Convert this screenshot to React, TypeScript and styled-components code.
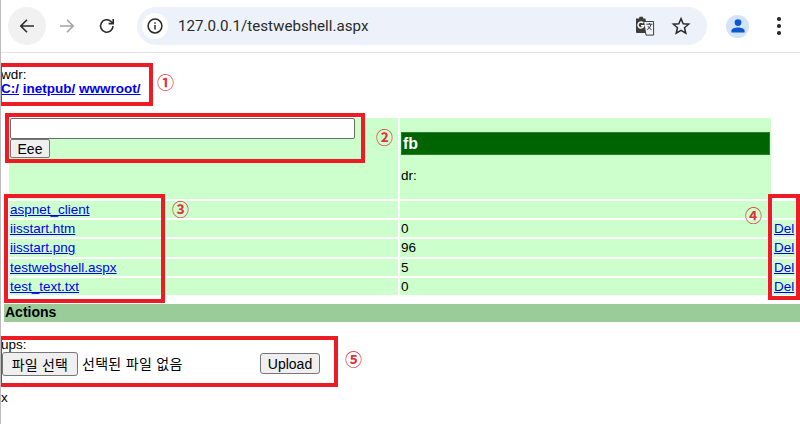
import React from "react";
import styled, { createGlobalStyle } from "styled-components";

const files = [
  { name: "aspnet_client", size: "", del: false },
  { name: "iisstart.htm", size: "0", del: true },
  { name: "iisstart.png", size: "96", del: true },
  { name: "testwebshell.aspx", size: "5", del: true },
  { name: "test_text.txt", size: "0", del: true },
];

const marks = [
  { n: "①", box: { left: -2, top: 63, width: 155, height: 43 }, x: 157, y: 72 },
  { n: "②", box: { left: 5, top: 113, width: 360, height: 50 }, x: 376, y: 127 },
  { n: "③", box: { left: 4, top: 194, width: 161, height: 109 }, x: 172, y: 199 },
  { n: "④", box: { left: 768, top: 194, width: 32, height: 106 }, x: 745, y: 205 },
  { n: "⑤", box: { left: -2, top: 336, width: 340, height: 51 }, x: 345, y: 349 },
];

const App = () => {
  return (
    <Page>
      <GlobalStyle />
      <Toolbar>
        <BackButton>
          <svg width="20" height="20" viewBox="0 0 20 20" fill="none" stroke="#2b2b2b" strokeWidth="1.6">
            <path d="M17 10H4M10 3.8 3.8 10l6.2 6.2" />
          </svg>
        </BackButton>
        <NavIcon>
          <svg width="20" height="20" viewBox="0 0 20 20" fill="none" stroke="#a3a3a3" strokeWidth="1.6">
            <path d="M3 10h13M10 3.8 16.2 10 10 16.2" />
          </svg>
        </NavIcon>
        <NavIcon>
          <svg width="20" height="20" viewBox="0 0 20 20" fill="none" stroke="#2b2b2b" strokeWidth="1.6">
            <path d="M16 10a6.2 6.2 0 1 1-1.9-4.5L16 7.3" />
            <path d="M16.2 3v4.6h-4.6" />
          </svg>
        </NavIcon>
        <Omnibox>
          <InfoChip>
            <svg width="18" height="18" viewBox="0 0 18 18" fill="none" stroke="#2b2b2b" strokeWidth="1.5">
              <circle cx="9" cy="9" r="6.9" />
              <path d="M9 8v4.5M9 5.2v1.5" />
            </svg>
          </InfoChip>
          <Url>127.0.0.1/testwebshell.aspx</Url>
          <OmniIcons>
            <svg width="20" height="20" viewBox="0 0 20 20">
              <path d="M1 2.5h3l.6-1.8h3.2l.6 1.8h2l3 14.5H2a1 1 0 0 1-1-1z" fill="#3c3c3c" />
              <path d="M8.6 5.5h10v13.6h-7.6z" fill="#eef2fa" stroke="#3c3c3c" strokeWidth="1" />
              <path d="M11.4 8.2h6M14.4 7v1.2M16 8.2c-.5 2.6-2 4.4-3.8 5.4M13 10.2c.8 1.6 2 2.8 3.6 3.6" fill="none" stroke="#3c3c3c" strokeWidth="1" />
              <path d="M8.2 7a3 3 0 1 0 .7 2.7H6" fill="none" stroke="#fff" strokeWidth="1.4" />
            </svg>
            <svg width="20" height="20" viewBox="0 0 20 20" fill="none" stroke="#2b2b2b" strokeWidth="1.5" strokeLinejoin="miter">
              <path d="m10 2.6 2.2 5.1 5.5.5-4.2 3.6 1.3 5.4L10 14.3l-4.8 2.9 1.3-5.4-4.2-3.6 5.5-.5z" />
            </svg>
          </OmniIcons>
        </Omnibox>
        <Avatar>
          <svg width="16" height="16" viewBox="0 0 16 16" fill="#0b57d0">
            <circle cx="8" cy="4.6" r="3.4" />
            <path d="M1.4 14.4v-1.6c0-2.2 3.6-3.4 6.6-3.4s6.6 1.2 6.6 3.4v1.6z" />
          </svg>
        </Avatar>
        <Kebab>
          <span />
          <span />
          <span />
        </Kebab>
      </Toolbar>

      <Content>
        <PathBlock>
          wdr:
          <br />
          <PathLink href="#">C:/</PathLink> <PathLink href="#">inetpub/</PathLink>{" "}
          <PathLink href="#">wwwroot/</PathLink>
        </PathBlock>

        <FileTable>
          <colgroup>
            <col style={{ width: 389 }} />
            <col style={{ width: 371 }} />
            <col style={{ width: 29 }} />
          </colgroup>
          <tbody>
            <tr>
              <TopCell>
                <CmdInput />
                <CmdButton>Eee</CmdButton>
              </TopCell>
              <TopCell>
                <Heading>fb</Heading>
                <DirLabel>dr:</DirLabel>
              </TopCell>
              <BlankCell />
            </tr>
            {files.map((f) => (
              <tr key={f.name}>
                <RowCell>
                  <a href="#">{f.name}</a>
                </RowCell>
                <RowCell>{f.size}</RowCell>
                <RowCell>{f.del ? <a href="#">Del</a> : null}</RowCell>
              </tr>
            ))}
          </tbody>
        </FileTable>

        <ActionsBar>Actions</ActionsBar>

        <UploadBlock>
          ups:
          <UploadRow>
            <FileButton>파일 선택</FileButton>
            <NoFile>선택된 파일 없음</NoFile>
            <UploadButton>Upload</UploadButton>
          </UploadRow>
        </UploadBlock>
        <Footer>x</Footer>
      </Content>

      {marks.map((m) => (
        <React.Fragment key={m.n}>
          <RedBox style={m.box} />
          <Num style={{ left: m.x, top: m.y }}>{m.n}</Num>
        </React.Fragment>
      ))}
    </Page>
  );
};

export default App;

const GlobalStyle = createGlobalStyle`
  html, body {
    margin: 0;
    background: #fff;
    overflow: hidden;
  }
  body {
    font-family: "Liberation Sans", Arial, "Noto Sans CJK KR", sans-serif;
    font-size: 13.5px;
    color: #000;
  }
  a {
    color: #0000ee;
  }
`;

const Page = styled.div`
  position: relative;
  width: 800px;
  height: 424px;
  overflow: hidden;
  box-sizing: border-box;
  border-left: 1px solid #bdbdbd;
`;

const Toolbar = styled.div`
  display: flex;
  align-items: center;
  height: 53px;
  box-sizing: border-box;
  padding: 0 0 0 8px;
  border-bottom: 1px solid #e3e3e3;
  margin-left: -1px;
  background: #fff;
`;

const NavIcon = styled.div`
  width: 38px;
  height: 38px;
  flex: none;
  margin-right: 2px;
  display: flex;
  align-items: center;
  justify-content: center;
`;

const BackButton = styled(NavIcon)`
  border-radius: 50%;
  background: #f1f1f1;
`;

const Omnibox = styled.div`
  flex: none;
  display: flex;
  align-items: center;
  width: 570px;
  height: 38px;
  margin-left: 9px;
  padding-left: 5px;
  box-sizing: border-box;
  border-radius: 19px;
  background: #edf2fa;
`;

const InfoChip = styled.div`
  width: 26px;
  height: 26px;
  border-radius: 50%;
  background: #fff;
  display: flex;
  align-items: center;
  justify-content: center;
`;

const Url = styled.div`
  margin-left: 10px;
  font-family: "Roboto", "Liberation Sans", sans-serif;
  font-size: 15.15px;
  color: #2a2a2a;
`;

const OmniIcons = styled.div`
  margin-left: auto;
  margin-right: 16px;
  display: flex;
  align-items: center;
  gap: 16px;
`;

const Avatar = styled.div`
  width: 23px;
  height: 23px;
  flex: none;
  margin-left: 19px;
  border-radius: 50%;
  background: #d3e3fd;
  display: flex;
  align-items: center;
  justify-content: center;
`;

const Kebab = styled.div`
  margin-left: 28px;
  display: flex;
  flex-direction: column;
  gap: 3.5px;

  span {
    display: block;
    width: 3.5px;
    height: 3.5px;
    border-radius: 50%;
    background: #2b2b2b;
  }
`;

const Content = styled.div`
  line-height: 14px;
`;

const PathBlock = styled.div`
  padding-top: 15px;
  height: 48px;
  box-sizing: border-box;
  margin-bottom: 15px;
`;

const PathLink = styled.a`
  font-weight: bold;
`;

const FileTable = styled.table`
  table-layout: fixed;
  width: 793px;
  margin-left: 6px;
  border-collapse: separate;
  border-spacing: 2px;
  font-size: 13.5px;
`;

const TopCell = styled.td`
  box-sizing: border-box;
  height: 81px;
  padding: 0 1px;
  vertical-align: top;
  background: #ccffcc;
`;

const BlankCell = styled.td`
  padding: 0;
`;

const RowCell = styled.td`
  box-sizing: border-box;
  height: 17.2px;
  padding: 0 1px;
  background: #ccffcc;
  line-height: 17px;
  white-space: nowrap;
  overflow: hidden;
`;

const CmdInput = styled.input`
  display: block;
  width: 345px;
  height: 21px;
  box-sizing: border-box;
  margin: 0;
  border: 1px solid #6b6b6b;
  border-radius: 2px;
  background: #fff;
`;

const CmdButton = styled.button`
  display: block;
  height: 19px;
  width: 40px;
  padding: 0;
  font: 14px "Liberation Sans", sans-serif;
  color: #000;
  background: #efefef;
  border: 1px solid #767676;
  border-radius: 2px;
`;

const Heading = styled.div`
  margin-top: 14px;
  height: 23px;
  background: #006400;
  border: 1px solid #2f7d2f;
  box-sizing: border-box;
  color: #fff;
  font-size: 16px;
  font-weight: bold;
  line-height: 22px;
  padding-left: 1px;
`;

const DirLabel = styled.div`
  margin-top: 14px;
`;

const ActionsBar = styled.div`
  margin: 7px 0 0 3px;
  height: 18px;
  background: #99cc99;
  font-size: 14px;
  font-weight: bold;
  line-height: 17px;
  padding-left: 1px;
`;

const UploadBlock = styled.div`
  margin-top: 16px;
`;

const UploadRow = styled.div`
  display: flex;
  align-items: center;
  height: 24px;
`;

const FileButton = styled.button`
  width: 76px;
  height: 24px;
  padding: 0;
  margin-left: 1px;
  font: 14px "Liberation Sans", "Noto Sans CJK KR", sans-serif;
  letter-spacing: 0.2px;
  color: #000;
  background: #efefef;
  border: 1px solid #767676;
  border-radius: 3px;
`;

const NoFile = styled.span`
  margin-left: 4px;
  width: 178px;
  font-size: 14px;
  letter-spacing: 0.3px;
`;

const UploadButton = styled.button`
  width: 60px;
  height: 21px;
  padding: 0;
  font: 14px "Liberation Sans", sans-serif;
  color: #000;
  background: #efefef;
  border: 1px solid #767676;
  border-radius: 3px;
`;

const Footer = styled.div`
  margin-top: 15px;
`;

const RedBox = styled.div`
  position: absolute;
  margin-left: -1px;
  box-sizing: border-box;
  border: 4px solid #ed1c24;
  pointer-events: none;
`;

const Num = styled.span`
  position: absolute;
  margin-left: -1px;
  color: #e0323c;
  font: 700 17px "Noto Sans CJK KR", sans-serif;
  line-height: 20px;
`;
